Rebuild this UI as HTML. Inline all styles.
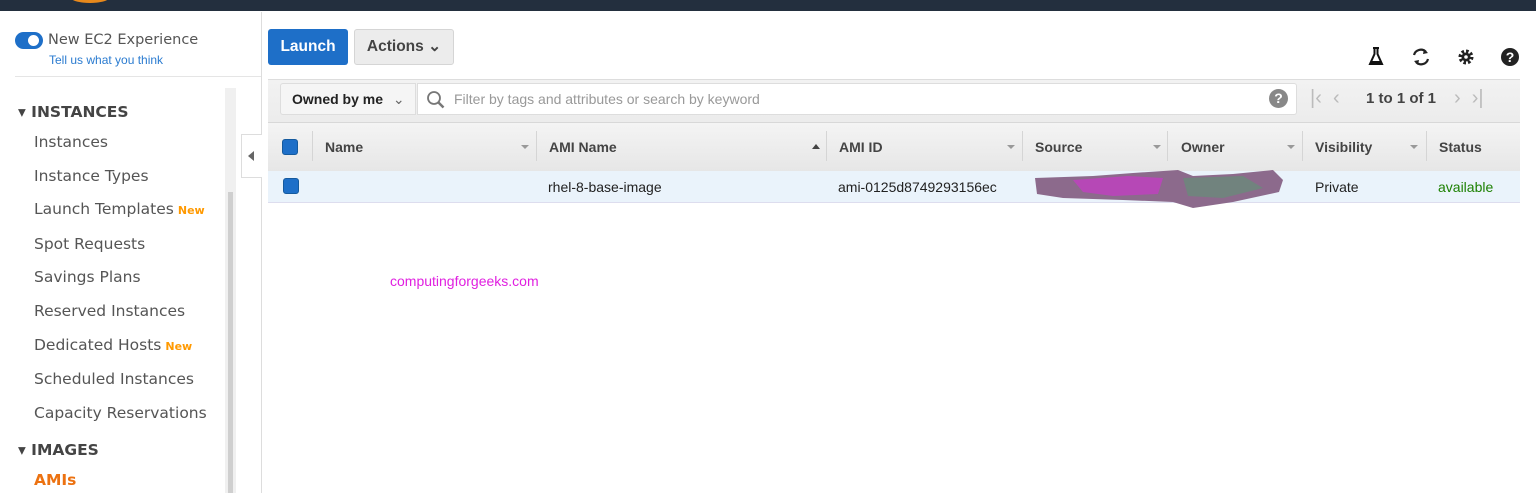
<!DOCTYPE html>
<html><head><style>
body{margin:0;width:1536px;height:493px;overflow:hidden;background:#fff;font-family:"Liberation Sans",sans-serif;position:relative}
.a{position:absolute}
.top{left:0;top:0;width:1536px;height:11px;background:#232f3e}
.side{font-family:"DejaVu Sans",sans-serif;color:#555;font-size:15px}
.nav{left:34px;font-size:15.5px;color:#555;font-family:"DejaVu Sans",sans-serif}
.new{color:#f90;font-weight:bold;font-size:11px;margin-left:4px}
.hd{font-family:"DejaVu Sans",sans-serif;font-weight:bold;color:#444;font-size:15.5px;left:18px}
.th{top:139px;font-size:14px;font-weight:bold;color:#444}
.sep{top:131px;width:1px;height:30px;background:#d5d5d5}
.car{top:145px;width:0;height:0;border-left:4px solid transparent;border-right:4px solid transparent;border-top:4px solid #999}
.td{top:179px;font-size:14px;color:#222}
.cb{width:14px;height:14px;background:#1e6fc8;border-radius:3px;border:1px solid #155a9e}
</style></head><body>
<div class="a top"></div>
<div class="a" style="left:72px;top:-6px;width:36px;height:9px;background:#e8891c;border-radius:50%"></div>
<div class="a" style="left:15px;top:32px;width:28px;height:17px;border-radius:9px;background:#1e6fc8"></div>
<div class="a" style="left:28px;top:35px;width:11px;height:11px;border-radius:50%;background:#fff"></div>
<div class="a side" style="left:48px;top:32px;font-size:14.5px">New EC2 Experience</div>
<div class="a" style="left:49px;top:53px;font-size:12px;color:#2a7bd0">Tell us what you think</div>
<div class="a" style="left:15px;top:76px;width:246px;height:1px;background:#e5e5e5"></div>
<div class="a" style="left:261px;top:12px;width:1px;height:481px;background:#ddd"></div>
<div class="a" style="left:225px;top:88px;width:11px;height:405px;background:#f0f0f0"></div>
<div class="a" style="left:228px;top:192px;width:5px;height:301px;background:#cfcfcf"></div>
<div class="a" style="left:241px;top:134px;width:20px;height:42px;background:#fff;border:1px solid #ddd;border-right:none"></div>
<div class="a" style="left:248px;top:151px;border-top:5px solid transparent;border-bottom:5px solid transparent;border-right:6px solid #666"></div>
<div class="a hd" style="top:103px">▾ INSTANCES</div>
<div class="a nav" style="top:133px">Instances</div>
<div class="a nav" style="top:167px">Instance Types</div>
<div class="a nav" style="top:200px">Launch Templates<span class="new">New</span></div>
<div class="a nav" style="top:235px">Spot Requests</div>
<div class="a nav" style="top:268px">Savings Plans</div>
<div class="a nav" style="top:302px">Reserved Instances</div>
<div class="a nav" style="top:336px">Dedicated Hosts<span class="new">New</span></div>
<div class="a nav" style="top:370px">Scheduled Instances</div>
<div class="a nav" style="top:404px">Capacity Reservations</div>
<div class="a hd" style="top:441px">▾ IMAGES</div>
<div class="a nav" style="top:471px;color:#ec7211;font-weight:bold">AMIs</div>
<div class="a" style="left:268px;top:29px;width:80px;height:36px;background:#1e6fc8;border-radius:3px;color:#fff;font-size:15.5px;font-weight:bold;text-align:center;line-height:36px">Launch</div>
<div class="a" style="left:354px;top:29px;width:100px;height:36px;background:#ececec;border:1px solid #d5d5d5;border-radius:3px;box-sizing:border-box;color:#444;font-size:15.5px;font-weight:bold;text-align:center;line-height:34px">Actions ⌄</div>
<svg class="a" style="left:1366px;top:45px" width="160" height="24" viewBox="0 0 160 24">
<path d="M7 3h6M8.5 3v6L4 19h12L11.5 9V3" fill="none" stroke="#111" stroke-width="2"/><path d="M5.5 16h9l1 3h-11z" fill="#111"/>
<path d="M48 10a7 7 0 0 1 12-3M62 14a7 7 0 0 1-12 3" fill="none" stroke="#222" stroke-width="2.2"/><path d="M58 4l4 4-5 1zM52 20l-4-4 5-1z" fill="#222"/>
<circle cx="100" cy="12" r="5.5" fill="none" stroke="#222" stroke-width="4" stroke-dasharray="2.4 1.9"/><circle cx="100" cy="12" r="4.5" fill="#222"/><circle cx="100" cy="12" r="1.8" fill="#fff"/>
<circle cx="144" cy="12" r="9" fill="#222"/><text x="144" y="17" font-size="14" font-weight="bold" fill="#fff" text-anchor="middle" font-family="Liberation Sans">?</text>
</svg>
<div class="a" style="left:268px;top:79px;width:1252px;height:93px;background:linear-gradient(#f2f2f2,#e4e4e4);border-top:1px solid #ddd"></div>
<div class="a" style="left:268px;top:122px;width:1252px;height:49px;background:linear-gradient(#f4f4f4,#e6e6e6);border-top:1px solid #d8d8d8"></div>
<div class="a" style="left:280px;top:83px;width:136px;height:32px;background:#f5f5f5;border:1px solid #ddd;border-radius:3px 0 0 3px;box-sizing:border-box;font-size:14px;font-weight:bold;color:#222;line-height:30px;padding-left:11px">Owned by me <span style="color:#666;font-weight:normal;margin-left:6px">⌄</span></div>
<div class="a" style="left:417px;top:83px;width:880px;height:32px;background:#fff;border:1px solid #ddd;border-radius:0 3px 3px 0;box-sizing:border-box"></div>
<svg class="a" style="left:426px;top:90px" width="20" height="20"><circle cx="8" cy="8" r="6" fill="none" stroke="#777" stroke-width="1.8"/><path d="M12.5 12.5l5 5" stroke="#777" stroke-width="2.5"/></svg>
<div class="a" style="left:454px;top:91px;font-size:14px;color:#999">Filter by tags and attributes or search by keyword</div>
<div class="a" style="left:1269px;top:89px;width:19px;height:19px;border-radius:50%;background:#888;color:#fff;font-weight:bold;font-size:14px;text-align:center;line-height:19px">?</div>
<div class="a" style="left:1310px;top:87px;font-size:20px;color:#bbb">|‹ &nbsp;‹</div>
<div class="a" style="left:1366px;top:90px;font-size:15px;font-weight:bold;color:#444">1 to 1 of 1</div>
<div class="a" style="left:1454px;top:87px;font-size:20px;color:#bbb">› &nbsp;›|</div>
<div class="a cb" style="left:282px;top:139px"></div>
<div class="a sep" style="left:312px"></div>
<div class="a th" style="left:325px">Name</div><div class="a car" style="left:521px"></div>
<div class="a sep" style="left:536px"></div>
<div class="a th" style="left:549px">AMI Name</div><div class="a" style="left:812px;top:144px;border-left:4px solid transparent;border-right:4px solid transparent;border-bottom:5px solid #444"></div>
<div class="a sep" style="left:826px"></div>
<div class="a th" style="left:839px">AMI ID</div><div class="a car" style="left:1007px"></div>
<div class="a sep" style="left:1022px"></div>
<div class="a th" style="left:1035px">Source</div><div class="a car" style="left:1153px"></div>
<div class="a sep" style="left:1167px"></div>
<div class="a th" style="left:1181px">Owner</div><div class="a car" style="left:1287px"></div>
<div class="a sep" style="left:1302px"></div>
<div class="a th" style="left:1315px">Visibility</div><div class="a car" style="left:1410px"></div>
<div class="a sep" style="left:1426px"></div>
<div class="a th" style="left:1439px">Status</div>
<div class="a" style="left:268px;top:171px;width:1252px;height:31px;background:#eaf3fb;border-bottom:1px solid #dde"></div>
<div class="a cb" style="left:283px;top:178px"></div>
<div class="a td" style="left:548px">rhel-8-base-image</div>
<div class="a td" style="left:838px">ami-0125d8749293156ec</div>
<svg class="a" style="left:1033px;top:164px" width="255" height="48"><path d="M2 14 L60 12 L100 9 L145 6 L160 12 L200 10 L240 6 L250 16 L246 28 L200 38 L160 44 L140 38 L90 36 L30 34 L4 30 Z" fill="#8c6a8c"/><path d="M40 16 L95 12 L130 14 L125 30 L80 32 L50 28Z" fill="#c040c0" opacity=".8"/><path d="M150 14 L210 12 L230 24 L190 34 L155 32Z" fill="#6a8a7a" opacity=".8"/></svg>
<div class="a td" style="left:1315px">Private</div>
<div class="a td" style="left:1438px;color:#1d8102">available</div>
<div class="a" style="left:390px;top:273px;font-size:14px;color:#e020e0">computingforgeeks.com</div>
</body></html>
